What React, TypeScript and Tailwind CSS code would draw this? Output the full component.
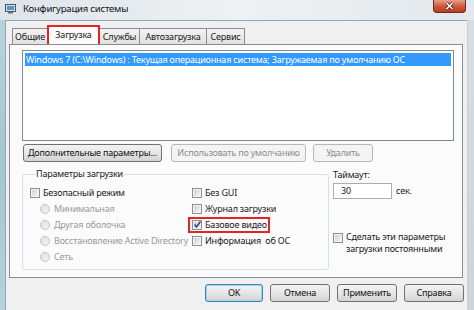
import React from "react";

const font = { fontFamily: '"Noto Sans", "Open Sans", sans-serif' };

function Check({ checked = false }: { checked?: boolean }) {
  return (
    <span className="relative inline-flex w-[10px] h-[10px] shrink-0 border border-[#8e8f8f] bg-[#f4f4f4] items-center justify-center">
      <span className="w-[6px] h-[6px] bg-gradient-to-br from-[#cbcfd5] to-[#f6f6f6]" />
      {checked && (
        <svg className="absolute left-[0px] top-[-1px]" width="9" height="9" viewBox="0 0 9 9">
          <path d="M1.5 4.5 L3.5 7 L7.5 1.5" stroke="#2a4a96" strokeWidth="1.6" fill="none" />
        </svg>
      )}
    </span>
  );
}

function Radio() {
  return (
    <span className="inline-flex w-[10px] h-[10px] shrink-0 rounded-full border border-[#c4c4c4] bg-gradient-to-br from-[#dedede] to-[#f4f4f4]" />
  );
}

function Btn({
  children,
  w,
  disabled = false,
  def = false,
}: {
  children: React.ReactNode;
  w: string;
  disabled?: boolean;
  def?: boolean;
}) {
  if (disabled)
    return (
      <div className={`${w} h-[18px] shrink-0 rounded-[3px] border border-[#b5b9bc] bg-[#f4f4f4] flex items-center justify-center text-[#8d8d8d] whitespace-nowrap`}>
        {children}
      </div>
    );
  return (
    <div
      className={`${w} h-[18px] shrink-0 rounded-[3px] border ${def ? "border-[#3c7fb1] shadow-[inset_0_0_0_1px_#9fd8f4]" : "border-[#707070]"} bg-gradient-to-b from-[#f3f3f3] via-[#e6e6e6] to-[#d3d3d3] flex items-center justify-center text-[#111] whitespace-nowrap`}
    >
      {children}
    </div>
  );
}

export default function App() {
  return (
    <div
      className="w-[474px] h-[310px] overflow-hidden flex flex-col bg-gradient-to-b from-[#e4e9ee] to-[#cfdbe4] text-[9px] leading-[12px] tracking-[-0.2px] text-[#1a1a1a]"
      style={font}
    >
      {/* title bar */}
      <div className="h-[20px] shrink-0 flex items-start bg-gradient-to-r from-[#dde4ea] via-[#eef1f3] to-[#e2e8ed]">
        <div className="mt-[4px] ml-[5px]">
          <svg width="11" height="10" viewBox="0 0 11 10">
            <rect x="0.5" y="0.5" width="10" height="7" fill="#d7dde5" stroke="#4a5766" />
            <rect x="2" y="2" width="7" height="4" fill="#5a8fd0" />
            <rect x="3" y="8" width="5" height="1.5" fill="#6b7480" />
          </svg>
        </div>
        <div className="ml-[7px] mt-[2px] text-[9.5px] leading-[13px] text-[#111]">Конфигурация системы</div>
        <div className="ml-auto mr-[8px] w-[33px] h-[13px] rounded-b-[4px] border border-t-0 border-[#6e2a1d] bg-gradient-to-b from-[#e5a08e] via-[#cf5a3e] to-[#b83a22] flex items-center justify-center">
          <svg width="9" height="8" viewBox="0 0 9 8">
            <path d="M1.5 1 L7.5 7 M7.5 1 L1.5 7" stroke="#4a1a10" strokeWidth="3" />
            <path d="M1.5 1 L7.5 7 M7.5 1 L1.5 7" stroke="#ffffff" strokeWidth="1.6" />
          </svg>
        </div>
      </div>

      {/* body */}
      <div className="flex flex-1">
        <div className="w-[5px] bg-gradient-to-b from-[#b9d3dc] via-[#9fc7cf] to-[#b7d2d9]" />
        <div className="w-[462px] border-l border-t border-[#9aa6b0] bg-[#f0f0f0] pl-[3px] flex flex-col">
          {/* tabs */}
          <div className="h-[23px] pt-[4px] pl-[3px] flex items-end">
            <div className="h-[16px] w-[36px] border border-b-0 border-[#898c95] bg-gradient-to-b from-[#f3f3f3] to-[#e1e1e1] flex items-center justify-center">Общие</div>
            <div className="relative h-[19px] w-[53px] -ml-[1px] border-2 border-b-0 border-[#e32424] bg-[#fbfbfb] flex items-center justify-center pb-[2px] z-10">Загрузка</div>
            <div className="h-[16px] w-[41px] -ml-[1px] border border-b-0 border-[#898c95] bg-gradient-to-b from-[#f3f3f3] to-[#e1e1e1] flex items-center justify-center">Службы</div>
            <div className="h-[16px] w-[68px] -ml-[1px] border border-b-0 border-[#898c95] bg-gradient-to-b from-[#f3f3f3] to-[#e1e1e1] flex items-center justify-center">Автозагрузка</div>
            <div className="h-[16px] w-[39px] -ml-[1px] border border-b-0 border-[#898c95] bg-gradient-to-b from-[#f3f3f3] to-[#e1e1e1] flex items-center justify-center">Сервис</div>
          </div>

          {/* pane */}
          <div className="w-[454px] h-[234px] border border-[#898c95] bg-[#fbfbfb] flex flex-col pl-[12px]">
            <div className="mt-[5px] w-[432px] h-[91px] border border-[#828790] bg-white p-[2px]">
              <div className="h-[13px] bg-[#3399ff] text-white pl-[1px] flex items-center whitespace-nowrap">
                Windows 7 (C:\Windows) : Текущая операционная система; Загружаемая по умолчанию ОС
              </div>
            </div>

            <div className="mt-[3px] flex ml-[1px]">
              <Btn w="w-[139px]">Дополнительные параметры...</Btn>
              <div className="ml-[9px]">
                <Btn w="w-[135px]" disabled>
                  Использовать по умолчанию
                </Btn>
              </div>
              <div className="ml-[7px]">
                <Btn w="w-[60px]" disabled>
                  Удалить
                </Btn>
              </div>
            </div>

            <div className="mt-[6px] flex">
              <fieldset className="w-[307px] h-[102px] border border-[#d5dfe5] rounded-[3px] pl-[7px]">
                <legend className="ml-[5px] px-[1px]">Параметры загрузки</legend>
                <div className="flex mt-[5px]">
                  <div className="w-[162px] flex flex-col">
                    <div className="h-[16px] flex items-center gap-[3px]">
                      <Check />
                      <span>Безопасный режим</span>
                    </div>
                    {["Минимальная", "Другая оболочка", "Восстановление Active Directory", "Сеть"].map((t) => (
                      <div key={t} className="h-[16px] flex items-center gap-[4px] pl-[10px] text-[#9a9a9a] whitespace-nowrap">
                        <Radio />
                        <span>{t}</span>
                      </div>
                    ))}
                  </div>
                  <div className="flex flex-col">
                    <div className="h-[16px] flex items-center gap-[3px]">
                      <Check />
                      <span>Без GUI</span>
                    </div>
                    <div className="h-[16px] flex items-center gap-[3px]">
                      <Check />
                      <span>Журнал загрузки</span>
                    </div>
                    <div className="h-[16px] flex items-center">
                      <div className="-ml-[4px] h-[16px] pl-[2px] pr-[1px] border-2 border-[#e32424] flex items-center gap-[3px]">
                        <Check checked />
                        <span>Базовое видео</span>
                      </div>
                    </div>
                    <div className="h-[16px] flex items-center gap-[3px] whitespace-nowrap">
                      <Check />
                      <span>Информация&nbsp; об ОС</span>
                    </div>
                  </div>
                </div>
              </fieldset>

              <div className="ml-[4px] flex flex-col">
                <div className="mt-[1px] h-[12px]">Таймаут:</div>
                <div className="mt-[2px] flex items-center">
                  <div className="w-[59px] h-[16px] border border-[#abadb3] bg-white pl-[7px] flex items-center">30</div>
                  <span className="ml-[4px]">сек.</span>
                </div>
                <div className="mt-[32px] flex items-start gap-[3px]">
                  <div className="mt-[1px]">
                    <Check />
                  </div>
                  <div className="leading-[12px]">
                    Сделать эти параметры
                    <br />
                    загрузки постоянными
                  </div>
                </div>
              </div>
            </div>
          </div>

          {/* bottom buttons */}
          <div className="mt-[6px] flex justify-end pr-[3px] gap-[7px]">
            <Btn w="w-[58px]" def>
              OK
            </Btn>
            <Btn w="w-[60px]">Отмена</Btn>
            <Btn w="w-[60px]">Применить</Btn>
            <Btn w="w-[60px]">Справка</Btn>
          </div>
        </div>
        <div className="w-[7px] border-l border-[#c8d0d6] bg-gradient-to-b from-[#d6dee5] to-[#c9d4dd]" />
      </div>
    </div>
  );
}
